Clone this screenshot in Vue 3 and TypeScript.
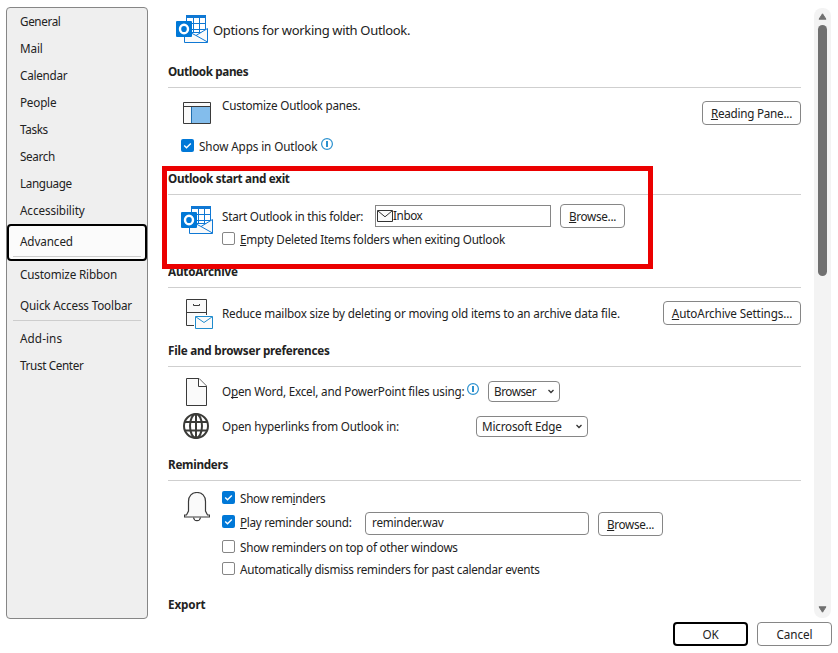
<script setup lang="ts">
interface NavItem {
  label: string
  spacing: number
  kind?: 'active' | 'ribbon' | 'toolbar'
}

const navItems: NavItem[] = [
  { label: 'General', spacing: -0.37 },
  { label: 'Mail', spacing: -0.12 },
  { label: 'Calendar', spacing: -0.25 },
  { label: 'People', spacing: -0.2 },
  { label: 'Tasks', spacing: -0.36 },
  { label: 'Search', spacing: -0.36 },
  { label: 'Language', spacing: -0.36 },
  { label: 'Accessibility', spacing: -0.1 },
  { label: 'Advanced', spacing: -0.1, kind: 'active' },
  { label: 'Customize Ribbon', spacing: -0.16, kind: 'ribbon' },
  { label: 'Quick Access Toolbar', spacing: -0.16, kind: 'toolbar' },
  { label: 'Add-ins', spacing: 0.1 },
  { label: 'Trust Center', spacing: -0.35 },
]
</script>

<template>
  <div class="dialog">
    <svg class="defs" width="0" height="0">
      <symbol id="outlook" viewBox="0 0 32 28">
        <path d="M10.5.5h19v17h-19z" fill="#fff" stroke="#0f78d4" />
        <path d="M10 0h20v3H10z" fill="#0f78d4" />
        <path d="M17.5 3v15M23.5 3v15M10 8.5h20M10 14.5h20" stroke="#0f78d4" fill="none" />
        <path d="M8.5 14.5 20 20.5 31.5 13.5v14h-23z" fill="#fafafa" stroke="#0f78d4" />
        <path d="M20 20.5l11.500 6.500" stroke="#0f78d4" fill="none" />
        <rect y="6" width="16" height="16" rx="1" fill="#0078d7" />
        <ellipse cx="8" cy="14" rx="4" ry="4.300" fill="none" stroke="#fff" stroke-width="2.400" />
      </symbol>
      <symbol id="info" viewBox="0 0 12 12">
        <circle cx="6" cy="6" r="5.400" fill="#fff" stroke="#2b91cf" stroke-width="1.200" />
        <path d="M6 3v6" stroke="#2b91cf" stroke-width="2" />
      </symbol>
      <symbol id="tick" viewBox="0 0 13 13">
        <path d="M3.200 6.500l2.300 2.300 4.300-4.300" fill="none" stroke="#fff" stroke-width="1.400" />
      </symbol>
      <symbol id="chevron" viewBox="0 0 8 5">
        <path d="M1.500 1 4 3.500 6.500 1" fill="none" stroke="#333" stroke-width="1.300" />
      </symbol>
    </svg>

    <div class="main">
      <nav class="sidebar">
        <div v-for="item in navItems" :key="item.label" class="nav" :class="item.kind">
          <span :style="{ letterSpacing: item.spacing + 'px' }">{{ item.label }}</span>
        </div>
      </nav>

      <main class="content">
        <header class="intro">
          <svg width="32" height="28"><use href="#outlook" /></svg>
          <span class="t-intro">Options for working with Outlook.</span>
        </header>

        <section class="panes">
          <h2 class="h-panes">Outlook panes</h2>
          <div class="row panes-row">
            <svg class="pane-icon" width="28" height="22" viewBox="0 0 28 22">
              <path d="M.5.5h27v21H.5z" fill="#fafafa" stroke="#3a3a3a" />
              <path d="M8 5h19v16H8z" fill="#83bdec" />
              <path d="M0 4.500h28" stroke="#3a3a3a" />
              <path d="M8.500 5v16" stroke="#1f6fb0" />
            </svg>
            <span class="t-customize">Customize Outlook panes.</span>
            <button class="btn w99"><span class="t-reading"><u>R</u>eading Pane...</span></button>
          </div>
          <div class="row apps-row">
            <i class="check on"><svg width="13" height="13"><use href="#tick" /></svg></i>
            <span class="t-apps">Show Apps in Outlook</span>
            <svg class="info" width="12" height="12"><use href="#info" /></svg>
          </div>
        </section>

        <section class="start">
          <h2 class="h-start">Outlook start and exit</h2>
          <div class="start-body">
            <svg class="start-icon" width="32" height="28"><use href="#outlook" /></svg>
            <div class="start-form">
              <div class="row start-row">
                <span class="start-label"><span class="t-start">Start Outlook in this folder:</span></span>
                <div class="folder">
                  <svg width="16" height="12" viewBox="0 0 16 12">
                    <path d="M.5.5h15v11H.5z" fill="#fafafa" stroke="#333" />
                    <path d="M.8.8 8 6.800 15.200.8" fill="none" stroke="#333" />
                  </svg>
                  <span class="t-inbox">Inbox</span>
                </div>
                <button class="btn w65"><span class="t-browse"><u>B</u>rowse...</span></button>
              </div>
              <div class="row empty-row">
                <i class="check"></i>
                <span class="t-empty"><u>E</u>mpty Deleted Items folders when exiting Outlook</span>
              </div>
            </div>
          </div>
        </section>

        <section class="archive">
          <h2 class="h-archive">AutoArchive</h2>
          <div class="row archive-row">
            <svg class="archive-icon" width="27" height="30" viewBox="0 0 27 30">
              <path d="M.5.500h20v26H.5z" fill="#fafafa" stroke="#3a3a3a" />
              <path d="M0 13.500h21M7.500 5v1.500h6V5" fill="none" stroke="#3a3a3a" />
              <path d="M8 16h19v14H8z" fill="#fff" />
              <path d="M9.500 17.500h17v12h-17z" fill="#fafafa" stroke="#1e8bcd" />
              <path d="M9.800 17.800 18 23.500l8.200-5.700" fill="none" stroke="#1e8bcd" />
            </svg>
            <span class="t-reduce">Reduce mailbox size by deleting or moving old items to an archive data file.</span>
            <button class="btn w138"><span class="t-settings"><u>A</u>utoArchive Settings...</span></button>
          </div>
        </section>

        <section class="files">
          <h2 class="h-files">File and browser preferences</h2>
          <div class="row open-row">
            <svg class="file-icon" width="21" height="28" viewBox="0 0 21 28">
              <path d="M.5.500H13L20.500 8v19.500H.5z" fill="#fafafa" stroke="#3a3a3a" />
              <path d="M12.500.5v8h8" fill="#fff" stroke="#3a3a3a" />
            </svg>
            <span class="t-open">O<u>p</u>en Word, Excel, and PowerPoint files using:</span>
            <svg class="info info-open" width="12" height="12"><use href="#info" /></svg>
            <div class="select w72">
              <span class="t-browser">Browser</span>
              <svg width="8" height="5"><use href="#chevron" /></svg>
            </div>
          </div>
          <div class="row link-row">
            <svg class="globe" width="26" height="26" viewBox="0 0 26 26" fill="none" stroke="#3b3b38" stroke-width="2">
              <circle cx="13" cy="13" r="12" />
              <ellipse cx="13" cy="13" rx="6" ry="12" />
              <path d="M13 1v24M2 9h22M2 17.500h22" />
            </svg>
            <span class="link-label"><span class="t-links">Open hyperlinks from Outlook in:</span></span>
            <div class="select w112">
              <span class="t-edge">Microsoft Edge</span>
              <svg width="8" height="5"><use href="#chevron" /></svg>
            </div>
          </div>
        </section>

        <section class="reminders">
          <h2 class="h-reminders">Reminders</h2>
          <div class="rem-body">
            <svg class="bell" width="26" height="30" viewBox="0 0 26 30">
              <path d="M9.500 25.500c.3 2 1.700 3.200 3.500 3.200s3.200-1.200 3.500-3.200" fill="#fafafa" stroke="#3a3a3a" stroke-width="1.200" />
              <path d="M4.500 9.500c0-5.500 3.500-9 8.500-9s8.500 3.500 8.500 9v9.500l2 4h2v2H.5v-2h2l2-4z" fill="#fafafa" stroke="#3a3a3a" stroke-width="1.200" />
            </svg>
            <div class="rem-list">
              <div class="row r1">
                <i class="check on"><svg width="13" height="13"><use href="#tick" /></svg></i>
                <span class="t-show">Show rem<u>i</u>nders</span>
              </div>
              <div class="row r2">
                <i class="check on"><svg width="13" height="13"><use href="#tick" /></svg></i>
                <span class="play-label"><span class="t-play"><u>P</u>lay reminder sound:</span></span>
                <div class="input"><span class="t-wav">reminder.wav</span></div>
                <button class="btn w65 rem-browse"><span class="t-browse"><u>B</u>rowse...</span></button>
              </div>
              <div class="row r3">
                <i class="check"></i>
                <span class="t-top">Show reminders on top of other windows</span>
              </div>
              <div class="row r4">
                <i class="check"></i>
                <span class="t-auto">Automatically dismiss reminders for past calendar events</span>
              </div>
            </div>
          </div>
        </section>

        <section class="export">
          <h2 class="h-export">Export</h2>
        </section>
      </main>

      <div class="scrollbar">
        <svg width="9" height="7" viewBox="0 0 9 7"><path d="M4.500.8 8 6.200H1z" fill="#707070" stroke="#707070" stroke-linejoin="round" /></svg>
        <div class="thumb"></div>
        <svg class="down" width="9" height="7" viewBox="0 0 9 7"><path d="M4.500 6.200 8 .8H1z" fill="#707070" stroke="#707070" stroke-linejoin="round" /></svg>
      </div>
    </div>

    <footer class="footer">
      <button class="btn w75 ok"><span class="t-ok">OK</span></button>
      <button class="btn w75"><span class="t-cancel">Cancel</span></button>
    </footer>

    <div class="highlight"></div>
  </div>
</template>

<style>
body {
  margin: 0;
  background: #fff;
}
</style>

<style scoped>
* {
  box-sizing: border-box;
}
.dialog {
  position: relative;
  width: 838px;
  height: 653px;
  overflow: hidden;
  background: #fff;
  color: #222;
  font: 11.7px/16px "Noto Sans", "Open Sans", sans-serif;
  white-space: nowrap;
}
.defs {
  position: absolute;
}
svg {
  display: block;
  flex: none;
}
u {
  text-decoration: underline;
  text-underline-offset: 1px;
  text-decoration-thickness: 1px;
  text-decoration-skip-ink: none;
}
.main {
  display: flex;
  height: 620px;
}
.sidebar {
  width: 142px;
  height: 612px;
  margin: 7px 0 0 6px;
  border: 1px solid #868686;
  border-radius: 4px;
  background: #efefef;
  flex: none;
}
.nav {
  display: flex;
  align-items: center;
  height: 27px;
  padding: 0 0 1px 13px;
}
.nav.active {
  position: relative;
  height: 37px;
  padding: 0 0 3px 11px;
  border: 2px solid #000;
  border-radius: 4px;
  background: #fbfbfb;
}
.nav.active::after {
  content: "";
  position: absolute;
  left: 4px;
  right: 4px;
  bottom: 2px;
  height: 1px;
  background: #cdcdcd;
}
.nav.ribbon {
  height: 28px;
  padding-bottom: 2px;
}
.nav.toolbar {
  position: relative;
  height: 36px;
  padding-bottom: 4px;
}
.nav.toolbar::after {
  content: "";
  position: absolute;
  left: 6px;
  right: 6px;
  bottom: 4px;
  height: 1px;
  background: #cdcdcd;
}
.content {
  width: 633px;
  margin-left: 20px;
  flex: none;
  overflow: hidden;
}
.intro {
  display: flex;
  gap: 5px;
  height: 57px;
  padding: 15px 0 0 8px;
  font-size: 13px;
  line-height: 30px;
}
h2 {
  height: 31px;
  margin: 0;
  border-bottom: 1px solid #cfcfcf;
  font-size: 11.700px;
  font-weight: 700;
  line-height: 28px;
}
.row {
  display: flex;
  align-items: flex-start;
}
.panes { height: 107px; }
.start { height: 93px; }
.archive { height: 79px; }
.files { height: 114px; }
.reminders { height: 140px; }
.export { height: 30px; }

.t-intro { letter-spacing: -0.330px; }
.h-panes { letter-spacing: -0.380px; }
.h-start { letter-spacing: -0.320px; }
.h-archive { letter-spacing: -0.200px; }
.h-files { letter-spacing: -0.240px; }
.h-reminders { letter-spacing: -0.280px; }
.h-export { letter-spacing: -0.150px; }
.t-customize { letter-spacing: -0.230px; }
.t-reading { letter-spacing: -0.250px; }
.t-apps { letter-spacing: -0.100px; }
.t-start { letter-spacing: -0.250px; }
.t-inbox { letter-spacing: -0.400px; }
.t-browse { letter-spacing: -0.300px; }
.t-empty { letter-spacing: -0.245px; }
.t-reduce { letter-spacing: -0.185px; }
.t-settings { letter-spacing: -0.130px; }
.t-open { letter-spacing: -0.200px; }
.t-browser { letter-spacing: -0.450px; }
.t-links { letter-spacing: -0.190px; }
.t-edge { letter-spacing: -0.190px; }
.t-show { letter-spacing: -0.280px; }
.t-play { letter-spacing: -0.280px; }
.t-wav { letter-spacing: -0.190px; }
.t-top { letter-spacing: -0.230px; }
.t-auto { letter-spacing: -0.250px; }
.t-ok { letter-spacing: -0.200px; }
.t-cancel { letter-spacing: -0.050px; }

.btn {
  display: flex;
  align-items: center;
  justify-content: center;
  height: 24px;
  padding: 0;
  border: 1px solid #868686;
  border-radius: 4px;
  background: #fff;
  color: inherit;
  font: inherit;
  flex: none;
}
.w99 { width: 99px; margin-left: auto; }
.w65 { width: 65px; margin-left: 9px; }
.w138 { width: 138px; margin-left: auto; }
.w75 { width: 75px; }
.check {
  width: 13px;
  height: 13px;
  margin-right: 5px;
  border: 1px solid #868686;
  border-radius: 2px;
  background: #fff;
  flex: none;
}
.check + span {
  margin-top: -1px;
}
.check.on {
  border: 0;
  background: #0078d7;
}

.panes-row {
  height: 51px;
  padding: 13px 0 0 15px;
}
.pane-icon { margin: 1px 11px 0 0; }
.t-customize { margin-top: -4px; }
.apps-row { padding-left: 13px; }
.info { margin: -1px 0 0 4px; }

.start-body {
  display: flex;
  gap: 9px;
  padding: 9px 0 0 13px;
}
.start-icon { margin-top: 2px; }
.start-label {
  width: 153px;
  margin-top: 4px;
}
.folder {
  display: flex;
  align-items: center;
  width: 176px;
  height: 22px;
  margin-top: 1px;
  padding-left: 1px;
  border: 1px solid #868686;
}
.t-inbox { padding-bottom: 2px; }
.empty-row { padding-top: 4px; }

.archive-row {
  padding: 11px 0 0 18px;
  gap: 9px;
}
.archive-row .btn { margin-top: 2px; }
.t-reduce { margin-top: 6px; }

.open-row {
  height: 46px;
  padding: 11px 0 0 18px;
}
.t-open {
  width: 241px;
  margin: 5px 0 0 15px;
}
.info-open { margin: 5px 9px 0 4px; }
.select {
  display: flex;
  align-items: center;
  justify-content: space-between;
  height: 21px;
  padding: 0 4px 1px 5px;
  border: 1px solid #868686;
  border-radius: 4px;
  background: #fff;
}
.open-row .select { margin-top: 3px; }
.w72 { width: 72px; }
.w112 { width: 112px; }
.link-row { padding-left: 15px; }
.link-label {
  width: 254px;
  margin: 5px 0 0 13px;
}
.link-row .select { margin-top: 3px; }

.rem-body {
  display: flex;
  gap: 12px;
  padding: 10px 0 0 16px;
}
.bell { margin-top: 1px; }
.r1 { height: 21px; }
.r2 { height: 28px; }
.r3 { height: 22px; }
.r2 .check { margin-top: 3px; }
.r2 .play-label {
  width: 125px;
  margin-top: 2px;
}
.input {
  display: flex;
  align-items: center;
  width: 224px;
  height: 23px;
  padding: 0 0 3px 6px;
  border: 1px solid #868686;
  border-radius: 4px;
}

.scrollbar {
  display: flex;
  flex-direction: column;
  align-items: center;
  width: 17px;
  height: 610px;
  margin: 8px 0 0 13px;
  padding: 5px 0;
  border-radius: 8px;
  background: #f3f3f3;
}
.thumb {
  width: 9px;
  height: 251px;
  margin-top: 5px;
  border-radius: 4.500px;
  background: #707070;
}
.down { margin-top: auto; }

.footer {
  display: flex;
  justify-content: flex-end;
  gap: 9px;
  padding: 2px 6px 0 0;
}
.btn.ok { border: 2px solid #000; }

.highlight {
  position: absolute;
  left: 162px;
  top: 166px;
  width: 491px;
  height: 103px;
  border: 5px solid #eb0000;
}
</style>
